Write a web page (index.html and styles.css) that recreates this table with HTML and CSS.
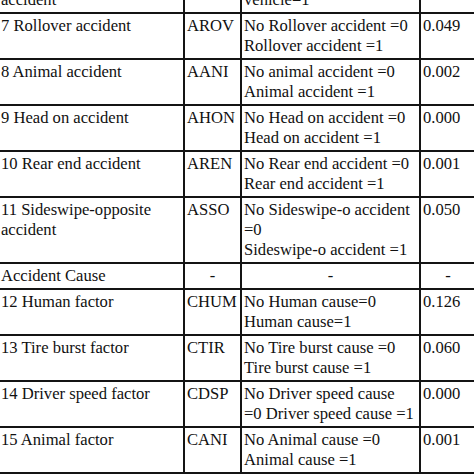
FILE: index.html
```html
<!DOCTYPE html>
<html>
<head>
<meta charset="utf-8">
<link rel="stylesheet" href="styles.css">
</head>
<body>
<div class="page">
<table class="grid">
<colgroup>
<col class="c1"><col class="c2"><col class="c3"><col class="c4">
</colgroup>
<tbody>
<tr><td>accident</td><td></td><td>vehicle=1</td><td></td></tr>
<tr><td>7 Rollover accident</td><td>AROV</td><td>No Rollover accident =0<br>Rollover accident =1</td><td>0.049</td></tr>
<tr><td>8 Animal accident</td><td>AANI</td><td>No animal accident =0<br>Animal accident =1</td><td>0.002</td></tr>
<tr><td>9 Head on accident</td><td>AHON</td><td>No Head on accident =0<br>Head on accident =1</td><td>0.000</td></tr>
<tr><td>10 Rear end accident</td><td>AREN</td><td>No Rear end accident =0<br>Rear end accident =1</td><td>0.001</td></tr>
<tr><td>11 Sideswipe-opposite<br>accident</td><td>ASSO</td><td>No Sideswipe-o accident<br>=0<br>Sideswipe-o accident =1</td><td>0.050</td></tr>
<tr><td>Accident Cause</td><td class="mid">-</td><td class="mid">-</td><td class="mid">-</td></tr>
<tr><td>12 Human factor</td><td>CHUM</td><td>No Human cause=0<br>Human cause=1</td><td>0.126</td></tr>
<tr><td>13 Tire burst factor</td><td>CTIR</td><td>No Tire burst cause =0<br>Tire burst cause =1</td><td>0.060</td></tr>
<tr><td>14 Driver speed factor</td><td>CDSP</td><td>No Driver speed cause<br>=0 Driver speed cause =1</td><td>0.000</td></tr>
<tr><td>15 Animal factor</td><td>CANI</td><td>No Animal cause =0<br>Animal cause =1</td><td>0.001</td></tr>
</tbody>
</table>
</div>
</body>
</html>
```
FILE: styles.css
```css
html, body {
  margin: 0;
  padding: 0;
  background: #fff;
}
.page {
  width: 474px;
  height: 474px;
  overflow: hidden;
}
.grid {
  border-collapse: collapse;
  table-layout: fixed;
  width: 480px;
  margin: -14px 0 0 -3px;
  font-family: "Liberation Serif", "Times New Roman", serif;
  font-size: 16.6px;
  line-height: 20px;
  color: #111;
}
.c1 { width: 186px; }
.c2 { width: 57px; }
.c3 { width: 179px; }
.c4 { width: 56px; }
.grid td {
  border: 2px solid #141414;
  padding: 2px 2px;
  vertical-align: top;
  white-space: nowrap;
  overflow: hidden;
}
.grid td.mid {
  text-align: center;
}
```
